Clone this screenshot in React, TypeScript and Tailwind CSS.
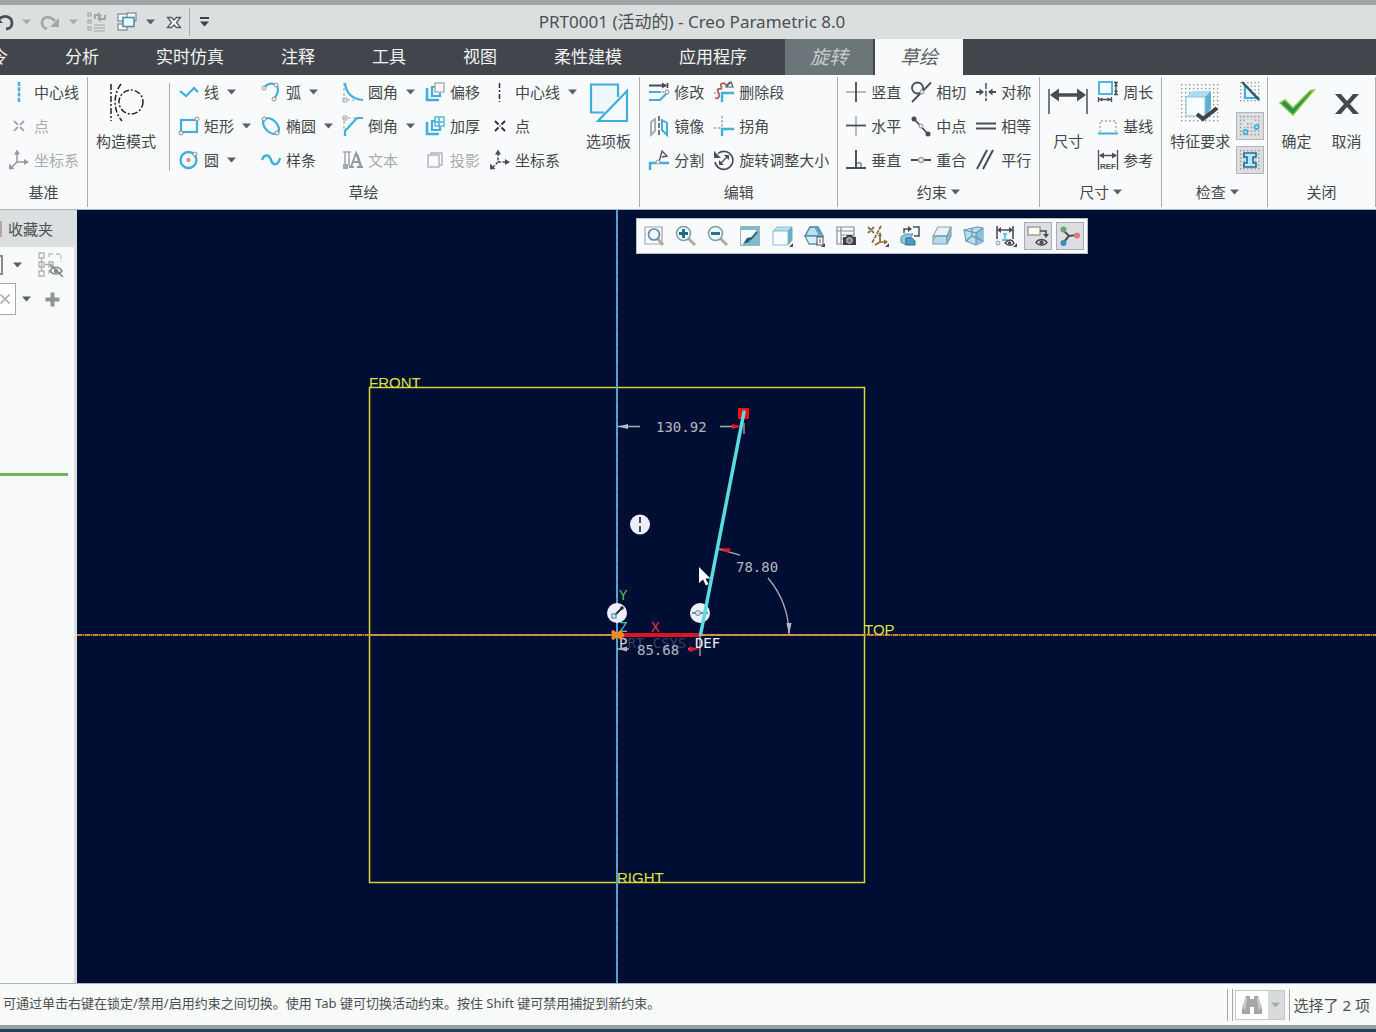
import { useState } from "react";
import type { ReactNode } from "react";
import clsx from "clsx";

const BLUE = "#3fb0dc";
const INK = "#4a4e52";
const MUTE = "#a4a7aa";

type Tool = { label: string; icon: ReactNode; menu?: boolean; disabled?: boolean };

function Icon({ children, size = 22, className }: { children: ReactNode; size?: number; className?: string }) {
  return (
    <svg
      width={size}
      height={size}
      viewBox={`0 0 ${size} ${size}`}
      fill="none"
      stroke={INK}
      strokeWidth="1.5"
      className={clsx("shrink-0", className)}
      aria-hidden="true"
    >
      {children}
    </svg>
  );
}

function Caret({ className = "text-[#5b5f63]" }: { className?: string }) {
  return (
    <svg width="9" height="6" viewBox="0 0 9 6" className={clsx("shrink-0", className)} aria-hidden="true">
      <path d="M0 0.5h9L4.5 5.5z" fill="currentColor" />
    </svg>
  );
}

function Knob({ x, y }: { x: number; y: number }) {
  return <circle cx={x} cy={y} r="2" fill="#f3f3f3" stroke="#8d9093" strokeWidth="1" />;
}

function Dots({ cols, rows, step }: { cols: number; rows: number; step: number }) {
  return (
    <g fill="#8b8f94" stroke="none">
      {Array.from({ length: cols * rows }, (_, i) => (
        <rect key={i} x={1 + (i % cols) * step} y={1 + Math.floor(i / cols) * step} width="1.3" height="1.3" />
      ))}
    </g>
  );
}

const axisArrows = (color: string, dash?: string) => (
  <Icon>
    <path d="M9 4v9h9M9 13l-5 5" stroke={color} strokeDasharray={dash} />
    <path d="M9 0.5l3 5H6zM21 13l-5 3v-6zM1 20.5v-6l5.5 5.5z" fill={color} stroke="none" />
  </Icon>
);

const datumTools: Tool[] = [
  {
    label: "中心线",
    icon: (
      <Icon>
        <path d="M11 1v20" stroke={BLUE} strokeWidth="2.5" strokeDasharray="4 1.3" />
      </Icon>
    ),
  },
  {
    label: "点",
    disabled: true,
    icon: (
      <Icon>
        <path d="M6 6l10 10M16 6L6 16" stroke={MUTE} strokeWidth="2" strokeDasharray="5.5 3" />
      </Icon>
    ),
  },
  { label: "坐标系", disabled: true, icon: axisArrows("#96999c") },
];

const sketchA: Tool[] = [
  {
    label: "线",
    menu: true,
    icon: (
      <Icon>
        <path d="M2 10l6 5 8-8 4 4" stroke={BLUE} strokeWidth="2.2" />
      </Icon>
    ),
  },
  {
    label: "矩形",
    menu: true,
    icon: (
      <Icon>
        <rect x="3" y="5" width="16" height="12" stroke={BLUE} strokeWidth="2.2" />
        <Knob x={19} y={4} />
        <Knob x={3} y={18} />
      </Icon>
    ),
  },
  {
    label: "圆",
    menu: true,
    icon: (
      <Icon>
        <circle cx="10.5" cy="11" r="8" stroke={BLUE} strokeWidth="2.4" />
        <circle cx="10.5" cy="11" r="2.2" fill="#c79a92" stroke="none" />
        <Knob x={17} y={5} />
      </Icon>
    ),
  },
];

const sketchB: Tool[] = [
  {
    label: "弧",
    menu: true,
    icon: (
      <Icon>
        <path d="M4 7C8 1 18 1 18 9c0 4-2 5-3 8" stroke={BLUE} strokeWidth="2.2" />
        <Knob x={4} y={7} />
        <Knob x={16} y={4} />
        <Knob x={14} y={18} />
      </Icon>
    ),
  },
  {
    label: "椭圆",
    menu: true,
    icon: (
      <Icon>
        <ellipse cx="11" cy="11" rx="9.5" ry="6" transform="rotate(45 11 11)" stroke={BLUE} strokeWidth="2.2" />
        <Knob x={4} y={4} />
        <Knob x={17} y={18} />
      </Icon>
    ),
  },
  {
    label: "样条",
    icon: (
      <Icon>
        <path d="M2 11c2-6 7-6 9 0s7 6 9-2" stroke={BLUE} strokeWidth="2.4" />
      </Icon>
    ),
  },
];

const sketchC: Tool[] = [
  {
    label: "圆角",
    menu: true,
    icon: (
      <Icon>
        <path d="M2 2v17h15" stroke={MUTE} strokeDasharray="3 2" strokeWidth="1.2" />
        <path d="M3 2c1 10 7 16 18 17" stroke={BLUE} strokeWidth="2.2" />
        <path d="M1 17h4v4H1z" stroke={MUTE} strokeWidth="1" />
      </Icon>
    ),
  },
  {
    label: "倒角",
    menu: true,
    icon: (
      <Icon>
        <path d="M2 14V3h13" stroke={MUTE} strokeDasharray="3 2" strokeWidth="1.2" />
        <path d="M3 21v-5L15 3h6" stroke={BLUE} strokeWidth="2.2" />
        <path d="M1 1h4v4H1z" stroke={MUTE} strokeWidth="1" />
      </Icon>
    ),
  },
  {
    label: "文本",
    disabled: true,
    icon: (
      <Icon>
        <path d="M3 3v13M7 3v14M1 3h8" stroke={MUTE} />
        <path d="M7 18h5M15 18h6M9 18l5-14 5 14M10.5 13h7" stroke="#96999c" strokeWidth="1.8" />
        <path d="M15 5l4 13" stroke="#96999c" strokeWidth="2.5" />
        <rect x="1" y="15" width="5" height="5" fill={MUTE} stroke="none" />
      </Icon>
    ),
  },
];

const offsetIcon = (extra: boolean) => (
  <Icon>
    <path d="M3 7v12h12" stroke={BLUE} strokeWidth="2.6" />
    <path d="M11 6H8v9h8v-3" stroke={BLUE} strokeWidth="2.2" />
    <rect x="11" y="2" width="9" height="9" stroke={extra ? BLUE : MUTE} strokeWidth="1.3" />
    {extra && <path d="M15 3v9M11 7h8" stroke={BLUE} strokeWidth="1.5" />}
  </Icon>
);

const sketchD: Tool[] = [
  { label: "偏移", icon: offsetIcon(false) },
  { label: "加厚", icon: offsetIcon(true) },
  {
    label: "投影",
    disabled: true,
    icon: (
      <Icon>
        <path d="M4 6h11v12H4zM7 6V4h11v12h-3" stroke="#b4b7ba" strokeWidth="1.5" />
      </Icon>
    ),
  },
];

const sketchE: Tool[] = [
  {
    label: "中心线",
    menu: true,
    icon: (
      <Icon>
        <path d="M10.5 2v19" stroke="#2c2f33" strokeDasharray="5 2 2 2" />
      </Icon>
    ),
  },
  {
    label: "点",
    icon: (
      <Icon>
        <path d="M6 6l3.5 3.5M12.500 12.5L16 16M16 6l-3.5 3.5M9.5 12.5L6 16" stroke="#2c2f33" strokeWidth="1.800" />
        <circle cx="11" cy="11" r="0.8" fill="#2c2f33" stroke="none" />
      </Icon>
    ),
  },
  { label: "坐标系", icon: axisArrows(INK, "3 1.5") },
];

const editA: Tool[] = [
  {
    label: "修改",
    icon: (
      <Icon>
        <path d="M1 4.500h17M19.5 2v5" strokeWidth="1.8" />
        <path d="M14 1.5l5 3-5 3z" fill={INK} stroke="none" />
        <path d="M1 11h12" stroke={BLUE} strokeWidth="2" />
        <path d="M14 11h5" stroke={MUTE} strokeDasharray="2 1" />
        <path d="M1 19h11l7-7" stroke={BLUE} strokeWidth="2.2" />
        <Knob x={19} y={11} />
      </Icon>
    ),
  },
  {
    label: "镜像",
    icon: (
      <Icon>
        <path d="M11 1v20" strokeDasharray="5 2" />
        <path d="M7 4L3 7v13l4-4z" stroke={MUTE} strokeWidth="1.8" />
        <path d="M14 5l5 3v12l-5-5z" stroke={BLUE} strokeWidth="2" />
      </Icon>
    ),
  },
  {
    label: "分割",
    icon: (
      <Icon>
        <path d="M2 21v-7h6m4 0h9" stroke={BLUE} strokeWidth="2.4" />
        <path d="M11 13l3-11 5 5-5 1" strokeWidth="1.3" />
        <Knob x={10} y={13} />
      </Icon>
    ),
  },
];

const editB: Tool[] = [
  {
    label: "删除段",
    icon: (
      <Icon>
        <path d="M2 17c3 1 5-1 4-4s-3-5 0-5 3-1 2-3 2-4 4-2 3 0 5-2" stroke="#b0605c" strokeWidth="1.8" />
        <path d="M13 6l5-5 2 5z" strokeWidth="1.1" />
        <path d="M9 21v-9h12" stroke={BLUE} strokeWidth="2.4" />
        <path d="M1 12h4" stroke={MUTE} strokeDasharray="2 1" />
      </Icon>
    ),
  },
  {
    label: "拐角",
    icon: (
      <Icon>
        <path d="M9 1v11M1 13h8" stroke={MUTE} strokeDasharray="2.5 1.5" />
        <path d="M9 21v-7h12" stroke={BLUE} strokeWidth="2.4" />
      </Icon>
    ),
  },
  {
    label: "旋转调整大小",
    icon: (
      <Icon>
        <path d="M5 4.500A9 9 0 1 1 2 13" strokeWidth="1.6" />
        <path d="M8 14l6-6" strokeWidth="1.3" />
        <path d="M1 2v7h7zM16 6v5l-5-5zM6 16v-5l5 5z" fill={INK} stroke="none" />
      </Icon>
    ),
  },
];

const constraintA: Tool[] = [
  {
    label: "竖直",
    icon: (
      <Icon>
        <path d="M1 11h20" stroke="#a2a5a7" />
        <path d="M11 1v20" strokeWidth="1.8" />
      </Icon>
    ),
  },
  {
    label: "水平",
    icon: (
      <Icon>
        <path d="M11 1v20" stroke="#a2a5a7" />
        <path d="M1 10.5h20" strokeWidth="1.8" />
      </Icon>
    ),
  },
  {
    label: "垂直",
    icon: (
      <Icon>
        <path d="M11 1v18M1 19h20" strokeWidth="1.9" />
        <path d="M11 14h5v5" strokeWidth="1" />
      </Icon>
    ),
  },
];

const constraintB: Tool[] = [
  {
    label: "相切",
    icon: (
      <Icon>
        <circle cx="7.5" cy="7" r="5.5" strokeWidth="1.8" />
        <path d="M21 1.5L2 21" strokeWidth="1.8" />
        <Knob x={12} y={11} />
      </Icon>
    ),
  },
  {
    label: "中点",
    icon: (
      <Icon>
        <path d="M4 4l14 15" strokeWidth="1.8" />
        <circle cx="4" cy="4" r="2.5" fill={INK} stroke="none" />
        <circle cx="18" cy="19" r="2.5" fill={INK} stroke="none" />
        <Knob x={11} y={11} />
      </Icon>
    ),
  },
  {
    label: "重合",
    icon: (
      <Icon>
        <path d="M1 11h7M14 11h7" strokeWidth="2.2" />
        <circle cx="11" cy="11" r="2.5" fill="#eee" stroke={MUTE} />
      </Icon>
    ),
  },
];

const constraintC: Tool[] = [
  {
    label: "对称",
    icon: (
      <Icon>
        <path d="M11 2v18" strokeDasharray="6 1.5" />
        <path d="M1 11h5M16 11h5" strokeWidth="1.8" />
        <path d="M9 11L4.500 7.5v7zM13 11l4.5-3.5v7z" fill={INK} stroke="none" />
      </Icon>
    ),
  },
  {
    label: "相等",
    icon: (
      <Icon>
        <path d="M1 8.5h20M1 13.5h20" strokeWidth="1.9" />
      </Icon>
    ),
  },
  {
    label: "平行",
    icon: (
      <Icon>
        <path d="M2 20L12 1M8 20L18 1" strokeWidth="2" />
      </Icon>
    ),
  },
];

const dimensionTools: Tool[] = [
  {
    label: "周长",
    icon: (
      <Icon>
        <rect x="2" y="1" width="13" height="12" stroke={BLUE} strokeWidth="1.8" />
        <path d="M19 2v11M17 1.5h4M17 13.5h4M2 18.5h12M1.5 16v5M14.5 16v5" strokeWidth="1.3" />
        <path d="M19 2l2 3.5h-4zM19 13l2-3.5h-4zM2 18.5l3.5-2v4zM14 18.5l-3.5-2v4z" fill={INK} stroke="none" />
      </Icon>
    ),
  },
  {
    label: "基线",
    icon: (
      <Icon>
        <path d="M3 17V6h16v11" stroke={MUTE} strokeDasharray="2 2" strokeWidth="1.3" />
        <path d="M1 18.5h20" stroke={BLUE} strokeWidth="2" />
      </Icon>
    ),
  },
  {
    label: "参考",
    icon: (
      <Icon>
        <path d="M1.5 1v20M20.5 1v20M3 6.5h16" strokeWidth="1.3" />
        <path d="M2 6.5l5-3v6zM20 6.5l-5-3v6z" fill={INK} stroke="none" />
        <text
          x="11"
          y="20"
          textAnchor="middle"
          fontSize="8"
          fontWeight="700"
          fill={INK}
          stroke="none"
          className="font-['Liberation_Sans',sans-serif]"
        >
          REF
        </text>
      </Icon>
    ),
  },
];

const viewTools: { label: string; pressed?: boolean; icon: ReactNode }[] = [
  {
    label: "重新调整",
    icon: (
      <Icon>
        <path d="M2 2h17v17H2z" stroke={MUTE} strokeWidth="1.2" />
        <path d="M15 14l5 6" stroke="#b3a79f" strokeWidth="3" />
        <circle cx="11" cy="9.500" r="5.5" fill="#eef6fa" stroke="#5f8da3" strokeWidth="1.7" />
      </Icon>
    ),
  },
  {
    label: "放大",
    icon: (
      <Icon>
        <path d="M13 13l7 7" stroke="#b3a79f" strokeWidth="3" />
        <circle cx="8.5" cy="8.5" r="7" fill="#f2f8fb" stroke="#7e9cab" />
        <path d="M4 8.5h9M8.5 4v9" stroke="#156c8e" strokeWidth="2.8" />
      </Icon>
    ),
  },
  {
    label: "缩小",
    icon: (
      <Icon>
        <path d="M13 13l7 7" stroke="#b3a79f" strokeWidth="3" />
        <circle cx="8.5" cy="8.5" r="7" fill="#f2f8fb" stroke="#7e9cab" />
        <path d="M4 8.500h9" stroke="#156c8e" strokeWidth="2.8" />
      </Icon>
    ),
  },
  {
    label: "重画",
    icon: (
      <Icon>
        <rect x="1.5" y="1.5" width="19" height="19" fill="#7dbad2" stroke="#9bb4be" strokeWidth="1" />
        <path d="M2 5h15C16 11 10 18 2 20z" fill="#f5fafc" stroke="none" />
        <path d="M18 7l-7 8" stroke="#41535d" strokeWidth="1.8" />
        <path d="M12 12l-2 5-6 2 4-6z" fill="#1f5e7d" stroke="none" />
      </Icon>
    ),
  },
  {
    label: "显示样式",
    icon: (
      <Icon>
        <path d="M2 6l4-4h15l-4 4z" fill="#b9e1f0" stroke="#8dbdd1" strokeWidth="1" />
        <path d="M17 6l4-4v13l-4 5z" fill="#66acc9" stroke="#6fa9c2" strokeWidth="1" />
        <path d="M2 6h15v14H2z" fill="#fafdff" stroke="#8db9cc" strokeWidth="1" />
        <path d="M22 18v4h-4z" fill={INK} stroke="none" />
      </Icon>
    ),
  },
  {
    label: "已保存方向",
    icon: (
      <Icon>
        <path d="M7 2h8l5 9H2z" fill="#b9e1f0" stroke="#477d96" strokeWidth="1.3" />
        <path d="M2 11h14l-2 8H6z" fill="#d9eef6" stroke="#5d93ac" strokeWidth="1.3" />
        <path d="M15 2l5 9h-4L11 2z" fill="#5da7c5" stroke="none" />
        <rect x="14" y="12" width="6" height="8" fill="#fff" stroke={INK} strokeWidth="1" />
        <path d="M16 15h2M16 17h2" strokeWidth="1" />
        <path d="M22 18v4h-4z" fill={INK} stroke="none" />
      </Icon>
    ),
  },
  {
    label: "视图管理器",
    icon: (
      <Icon>
        <path d="M2 2h17v17H2zM2 6h17M6 2v17M6 10h13M6 14h13" stroke="#8a8e92" strokeWidth="1.2" />
        <path d="M8 12h3l1-2h5l1 2h3v8H8z" fill="#3e4246" stroke="none" />
        <circle cx="14.5" cy="15.5" r="2.8" fill="#777" stroke="#ddd" strokeWidth="1" />
      </Icon>
    ),
  },
  {
    label: "基准显示过滤器",
    icon: (
      <Icon>
        <path d="M1 2l6 6M7 2L1 8M14 1L5 18" stroke="#8a7344" strokeWidth="1.8" strokeDasharray="4 1" />
        <path d="M13 9v8h7M13 17l-5 3" stroke="#8a6a3c" strokeWidth="1.7" />
        <path d="M13 7l2 4h-4zM21 17l-4 2.5v-5z" fill="#8a6a3c" stroke="none" />
        <path d="M22 18v4h-4z" fill={INK} stroke="none" />
      </Icon>
    ),
  },
  {
    label: "草绘视图",
    icon: (
      <Icon>
        <path d="M14 2h6v9h-5" strokeWidth="1.5" />
        <path d="M5 8V4h5" strokeWidth="1.5" />
        <path d="M9 1l4 3-4 3z" fill={INK} stroke="none" />
        <path d="M2 12l4-3h8l-3 4H7v7l-5-3z" fill="#8ec8df" stroke="#4d93af" strokeWidth="1" />
        <path d="M7 13h6l3 3v4H7z" fill="#4c9dbf" stroke="#2f7595" strokeWidth="1" />
      </Icon>
    ),
  },
  {
    label: "修剪模型",
    icon: (
      <Icon>
        <path d="M7 2h13l-4 9H2z" fill="#e9f4f8" stroke="#8da6b1" strokeWidth="1.1" />
        <path d="M2 11h14v8H2z" fill="#b5dcec" stroke="#7a9dac" strokeWidth="1.1" />
        <path d="M16 11l4-9v9l-4 8z" fill="#8fc3d8" stroke="#7a9dac" strokeWidth="1.1" />
        <path d="M2 15l4-4h14" stroke="#7a9dac" strokeWidth="1" />
      </Icon>
    ),
  },
  {
    label: "透视图",
    icon: (
      <Icon>
        <path d="M1 5l13-3 6 1v14l-7 3L3 16z" fill="#b9deec" stroke="#6e9db1" strokeWidth="1.1" />
        <path d="M13 8l7-5v14l-7 3z" fill="#8cc2d8" stroke="none" />
        <path d="M1 5l12 3 7-5M13 8v12M3 16l6-5 11 5M9 11V3" stroke="#5d93ac" strokeWidth="1.1" />
      </Icon>
    ),
  },
  {
    label: "注释显示",
    icon: (
      <Icon>
        <path d="M2 1v13M18 1v13M3 5h14" strokeWidth="1.6" />
        <path d="M2 5l4-3v6zM18 5l-4-3v6z" fill={INK} stroke="none" />
        <path d="M10 9v6M7 15h6M8 9h4" stroke={BLUE} strokeWidth="1.3" />
        <circle cx="3" cy="18" r="2" stroke="#999" strokeWidth="1" fill="#eee" />
        <path d="M10 18c3-4 7-4 9 0-2 3-6 3-9 0z" fill="#fff" strokeWidth="1.4" />
        <circle cx="14.5" cy="18" r="1.8" fill={INK} stroke="none" />
        <path d="M22 18v4h-4z" fill={INK} stroke="none" />
      </Icon>
    ),
  },
  {
    label: "草绘器显示",
    pressed: true,
    icon: (
      <Icon>
        <rect x="1" y="2" width="12" height="8" fill="#fdfbef" stroke="#8a8e92" strokeWidth="1.2" />
        <path d="M13 6h6v4" strokeWidth="1.6" />
        <path d="M19 13l-3-4h6z" fill={INK} stroke="none" />
        <path d="M9 17.5c3-4 8-4 11 0-3 3.500-8 3.500-11 0z" fill="#fff" strokeWidth="1.5" />
        <circle cx="14.5" cy="17.5" r="2.2" fill={INK} stroke="none" />
      </Icon>
    ),
  },
  {
    label: "旋转中心",
    pressed: true,
    icon: (
      <Icon>
        <path d="M4 5l6 6 8-1M10 11l-6 7" strokeWidth="2" />
        <circle cx="4.5" cy="4.5" r="3" fill="#6fa370" stroke="none" />
        <circle cx="18" cy="10.5" r="3" fill="#e2777b" stroke="none" />
        <circle cx="4.5" cy="18" r="3" fill="#3a8fbd" stroke="none" />
      </Icon>
    ),
  },
];

function ToolColumn({ tools }: { tools: Tool[] }) {
  return (
    <div className="flex flex-col items-start">
      {tools.map((tool) => (
        <button
          key={tool.label}
          type="button"
          disabled={tool.disabled}
          className="flex h-[34px] items-center gap-1 whitespace-nowrap text-[#44484c] disabled:text-[#a9acaf]"
        >
          {tool.icon}
          <span>{tool.label}</span>
          {tool.menu && <Caret className="ml-1 text-[#5b5f63]" />}
        </button>
      ))}
    </div>
  );
}

function BigTool({ label, icon }: { label: string; icon: ReactNode }) {
  return (
    <button type="button" className="flex flex-col items-center gap-2 self-start pt-2 whitespace-nowrap">
      {icon}
      <span>{label}</span>
    </button>
  );
}

function Group({
  title,
  menu,
  className,
  children,
}: {
  title: string;
  menu?: boolean;
  className?: string;
  children: ReactNode;
}) {
  return (
    <section className={clsx("my-0.5 flex flex-col border-r border-[#a9adb1]", className)}>
      <div className="-mt-0.5 flex h-[102px] gap-[9px]">{children}</div>
      <h2 className="flex h-[30px] items-center justify-center gap-1">
        {title}
        {menu && <Caret />}
      </h2>
    </section>
  );
}

const tabs = ["令", "分析", "实时仿真", "注释", "工具", "视图", "柔性建模", "应用程序"];

function TitleBar() {
  return (
    <header className="flex h-[39px] items-center border-t-[5px] border-[#9fa3a3] bg-[#dbdfdf]">
      <div className="-ml-2 flex flex-1 items-center gap-2">
        <button type="button" aria-label="撤消">
          <Icon>
            <path d="M7 8c6-5 13-2 13 4 0 3-2 6-6 6" strokeWidth="2.8" />
            <path d="M3 3v9h8z" fill={INK} stroke="none" />
          </Icon>
        </button>
        <Caret className="text-[#a7abab]" />
        <button type="button" aria-label="重做">
          <Icon>
            <path d="M16 10C9 3 3 7 3 12c0 3 2 5 5 6" stroke="#a2a6a6" strokeWidth="2.6" />
            <path d="M20 7v9h-9z" fill="#a2a6a6" stroke="none" />
          </Icon>
        </button>
        <Caret className="text-[#a7abab]" />
        <button type="button" aria-label="重新生成">
          <Icon>
            <path d="M2 2h3v3H2zM2 9h3v3H2zM2 16h3v3H2zM8 14h11M8 17h11M8 20h11" stroke="#a2a6a6" strokeWidth="1.2" />
            <path d="M9 8V4h5M19 4v4h-5" stroke="#a2a6a6" strokeWidth="2" />
            <path d="M12 1l4 3-4 3zM15 5v6l-4-3z" fill="#a2a6a6" stroke="none" />
          </Icon>
        </button>
        <button type="button" aria-label="窗口">
          <Icon>
            <rect x="2" y="3" width="11" height="7" fill="#f4f7f8" stroke="#7f878b" strokeWidth="1.2" />
            <rect x="2" y="13" width="9" height="6" fill="#f4f7f8" stroke="#7f878b" strokeWidth="1.2" />
            <rect x="11" y="2" width="9" height="8" fill="#f4f7f8" stroke="#7f878b" strokeWidth="1.2" />
            <rect x="7" y="6.5" width="11" height="9" fill="#eef6fa" stroke="#3d8fb0" strokeWidth="1.5" />
          </Icon>
        </button>
        <Caret />
        <button type="button" aria-label="关闭窗口">
          <Icon>
            <path
              d="M4.500 6.500h4L11 9l2.500-2.500h4L13.500 11.500l4 5h-4L11 14l-2.500 2.500h-4l4-5z"
              fill="#fafafa"
              stroke="#55595d"
              strokeWidth="1.3"
            />
          </Icon>
        </button>
        <span className="-ml-1 h-7 w-px bg-[#a6aaaa]" />
        <button type="button" aria-label="自定义快速访问工具栏" className="ml-0.5 flex flex-col gap-0.5">
          <span className="h-0.5 w-[9px] bg-[#3c4044]" />
          <Caret className="text-[#3c4044]" />
        </button>
      </div>
      <h1 className="pl-4 text-[17px] leading-6 text-[#4b4f52]">PRT0001 (活动的) - Creo Parametric 8.0</h1>
      <div className="flex-1" />
    </header>
  );
}

function Ribbon() {
  return (
    <div className="flex border-b border-[#aab4c2] bg-[#f9fafc] text-[15px] leading-5 text-[#44484c]">
      <Group title="基准" className="px-2">
        <ToolColumn tools={datumTools} />
      </Group>

      <Group title="草绘" className="px-2">
        <BigTool
          label="构造模式"
          icon={
            <Icon size={40}>
              <path d="M5 1v37" stroke="#222" strokeDasharray="6 2 2 2" />
              <path d="M15 1C7 11 7 28 16 38" stroke="#222" strokeDasharray="6 2 2 2" />
              <circle cx="25" cy="19" r="12" stroke="#222" strokeDasharray="6 2 2 2" />
            </Icon>
          }
        />
        <div className="mt-2 ml-1 h-[88px] w-px bg-[#a9adb1]" />
        <div className="-ml-px flex gap-[9px]">
          <ToolColumn tools={sketchA} />
          <ToolColumn tools={sketchB} />
          <ToolColumn tools={sketchC} />
          <ToolColumn tools={sketchD} />
          <ToolColumn tools={sketchE} />
        </div>
        <BigTool
          label="选项板"
          icon={
            <Icon size={40}>
              <path d="M29 14V1.5H2v28h13" fill="#eef7fb" stroke={BLUE} strokeWidth="2.2" />
              <path d="M38 8v30H9z" fill="#f4fafd" stroke={BLUE} strokeWidth="2.2" />
            </Icon>
          }
        />
      </Group>

      <Group title="编辑" className="px-2">
        <ToolColumn tools={editA} />
        <ToolColumn tools={editB} />
      </Group>

      <Group title="约束" menu className="pr-2 pl-[7px]">
        <ToolColumn tools={constraintA} />
        <ToolColumn tools={constraintB} />
        <ToolColumn tools={constraintC} />
      </Group>

      <Group title="尺寸" menu className="px-2">
        <BigTool
          label="尺寸"
          icon={
            <Icon size={40}>
              <path d="M1 6v25M39 6v25" strokeWidth="1.5" />
              <path d="M8 12h24" strokeWidth="3.5" />
              <path d="M2 12l9-6.5v13zM38 12l-9-6.5v13z" fill={INK} stroke="none" />
            </Icon>
          }
        />
        <ToolColumn tools={dimensionTools} />
      </Group>

      <Group title="检查" menu className="pr-[3px] pl-2">
        <BigTool
          label="特征要求"
          icon={
            <Icon size={40}>
              <Dots cols={10} rows={10} step={4} />
              <path d="M6 14l7-6h18l-6 6z" fill="#a9dcf0" stroke="none" />
              <path d="M25 14l6-6v18l-6 7z" fill="#5cb0d3" stroke="none" />
              <path d="M6 14h19v19H6z" fill="#f7fcff" stroke="#8fc4da" strokeWidth="1" />
              <path d="M17 31l6 5 14-11" stroke="#3f4347" strokeWidth="4" />
            </Icon>
          }
        />
        <div className="-ml-[3px] flex flex-col">
          <button type="button" aria-label="重叠几何" className="my-[3px] flex h-7 w-7 items-center justify-center">
            <Icon>
              <Dots cols={6} rows={6} step={3.6} />
              <path d="M6 4v13h13z" fill="#e3f2f8" stroke={BLUE} strokeWidth="2" />
              <path d="M3 1l17 18" strokeWidth="2" stroke="#2f5468" />
            </Icon>
          </button>
          {["突出显示开放端", "着色封闭环"].map((label, i) => (
            <button
              key={label}
              type="button"
              aria-pressed="true"
              aria-label={label}
              className="my-[3px] flex h-7 w-7 items-center justify-center border border-[#b3b6b9] bg-[#dcdee0]"
            >
              <Icon>
                <Dots cols={6} rows={6} step={3.6} />
                {i === 0 ? (
                  <>
                    <path d="M3 13l5-7h6l4 6" stroke="#dfe5e9" strokeWidth="2.5" />
                    <circle cx="6.5" cy="17" r="2" fill="#e9f6fb" stroke={BLUE} strokeWidth="1.8" />
                    <circle cx="17.5" cy="12" r="2" fill="#e9f6fb" stroke={BLUE} strokeWidth="1.8" />
                  </>
                ) : (
                  <path d="M5 4h12v4h-3v6h3v4H5v-4h3V8H5z" fill="#bfe4f3" stroke="#1f6f92" strokeWidth="1.6" />
                )}
              </Icon>
            </button>
          ))}
        </div>
      </Group>

      <Group title="关闭" className="flex-1 items-center">
        <div className="flex gap-4">
          <BigTool
            label="确定"
            icon={
              <Icon size={40} className="-mx-[3px]">
                <path d="M3 20l5-3 8 8L33 8l4-1-21 25z" fill="#2f9150" stroke="#86c440" strokeWidth="1.5" />
              </Icon>
            }
          />
          <BigTool
            label="取消"
            icon={
              <Icon size={40} className="-mx-[3px]">
                <path d="M8 11h6l6 7 6-7h6l-9 10 9 10h-6l-6-7-6 7H8l9-10z" fill="#454a4e" stroke="none" />
              </Icon>
            }
          />
        </div>
      </Group>
    </div>
  );
}

function SidePanel() {
  return (
    <aside className="w-[77px] shrink-0 overflow-hidden border-r-[3px] border-[#dbdfe0] bg-[#f8fafa] text-[15px] leading-5 text-[#4b4f52]">
      <div className="flex h-[37px] items-center bg-[#dbdfdf]">
        <span className="h-4 w-0.5 bg-[#b9a79c]" />
        <button type="button" className="ml-1.5 whitespace-nowrap">
          收藏夹
        </button>
      </div>
      <div className="flex h-9 items-center">
        <span className="-ml-4 h-5 w-[19px] shrink-0 border-2 border-[#85898c]" />
        <Caret className="ml-2.5 text-[#5b5f63]" />
        <button type="button" aria-label="树过滤器" className="ml-4">
          <Icon size={26}>
            <path d="M1 1h5v5H1zM1 10h5v5H1zM1 19h5v5H1zM11 10h4v5h-4zM3.5 6v13M6 12.5h5" stroke="#aeb1b4" strokeWidth="1.3" />
            <path d="M11 1v6M11 2h4M18 2h5v8M11 18v6" stroke="#b9bcbf" strokeWidth="1.3" strokeDasharray="4 2" />
            <path d="M12 19c3-5 9-5 12 0-3 4-9 4-12 0zM12 12l13 13" stroke="#85898c" strokeWidth="1.5" />
            <circle cx="18" cy="19" r="2.2" fill="#85898c" stroke="none" />
          </Icon>
        </button>
      </div>
      <div className="flex h-8 items-center">
        <div className="-ml-10 flex h-8 w-14 shrink-0 items-center border border-[#a5a9ac] bg-white">
          <input type="text" aria-label="搜索" className="w-full min-w-0 outline-none" />
          <button type="button" aria-label="清除" className="pr-1">
            <svg width="12" height="12" viewBox="0 0 12 12" stroke="#a2a5a8" strokeWidth="1.5" aria-hidden="true">
              <path d="M1.5 1.5l9 9M10.5 1.5l-9 9" />
            </svg>
          </button>
        </div>
        <Caret className="ml-1.5 text-[#5b5f63]" />
        <button type="button" aria-label="添加" className="ml-3.5">
          <svg width="15" height="15" viewBox="0 0 15 15" stroke="#919497" strokeWidth="4" aria-hidden="true">
            <path d="M7.5 0.5v14M0.5 7.5h14" />
          </svg>
        </button>
      </div>
      <div className="mt-[158px] mr-1.5 h-[3px] bg-[#6cb85a]" />
    </aside>
  );
}

function Sketch() {
  return (
    <svg className="absolute inset-0 h-full w-full" fill="none" aria-label="草绘图形">
      {/* datum planes and references */}
      <rect x="292.5" y="177.5" width="495" height="495" stroke="#d3d636" strokeWidth="1.5" />
      <line x1="0" y1="425" x2="100%" y2="425" stroke="#7a4d1c" strokeWidth="1.5" />
      <line x1="0" y1="425" x2="100%" y2="425" stroke="#e39a3c" strokeWidth="1.5" strokeDasharray="5 1 1 1" />
      <line x1="292" y1="425" x2="787" y2="425" stroke="#cfa14e" strokeWidth="1.5" />
      <line x1="540" y1="0" x2="540" y2="100%" stroke="#8d9fb0" strokeWidth="2" />
      <line x1="540" y1="0" x2="540" y2="100%" stroke="#4aa0d8" strokeWidth="2" strokeDasharray="6 1 1 1" />

      <g fill="#dfe243" fontSize="15" className="font-['Liberation_Sans',sans-serif]">
        <text x="292" y="178">FRONT</text>
        <text x="787" y="425">TOP</text>
        <text x="540" y="673">RIGHT</text>
      </g>

      {/* dimensions */}
      <g stroke="#a8adb6" strokeWidth="1.3">
        <path d="M541 216.5h22M643 216.5h12M667 213v11M623 427v19M541 439h11M611 439h4" />
        <path d="M642 339l21 6M691 368A89 89 0 0 1 712 424" />
      </g>
      <path d="M541 216.500l10-2.5v5zM541 439l9-2.5v5zM712 425l-2.5-12h5z" fill="#b5b9c1" />
      <path d="M665 216.500l-10-2.5v5zM623 439l-11-2.5v5zM642 338l11.5 0.5-1.5 5z" fill="#e31a24" />

      {/* coordinate system labels */}
      <g fontSize="14" className="font-['DejaVu_Sans_Mono',monospace]">
        <text x="542" y="438" fill="#34405e">
          <tspan fill="#d5d8de">P</tspan>RT_CSYS_<tspan fill="#f0f2f5">DEF</tspan>
        </text>
        <g fill="#b3b8c0">
          <text x="579" y="222">130.92</text>
          <text x="659" y="362">78.80</text>
          <text x="560" y="445">85.68</text>
        </g>
        <text x="542" y="390" fill="#33cc4d">Y</text>
        <text x="542" y="422" fill="#3fc6dd">Z</text>
        <text x="574" y="422" fill="#e2343f">X</text>
      </g>

      {/* constraint glyphs */}
      <g fill="#eeeefb">
        <circle cx="563" cy="314.5" r="10" />
        <circle cx="540" cy="403" r="10" />
        <circle cx="623" cy="403" r="10" />
      </g>
      <path d="M563 307v6M563 316v6" stroke="#33363d" strokeWidth="1.8" />
      <path d="M538 405l7-7" stroke="#23262c" strokeWidth="2" />
      <circle cx="545" cy="398" r="1.8" fill="#23262c" />
      <rect x="535" y="404" width="4" height="4" stroke="#4f9cb8" strokeWidth="1.3" />
      <path d="M615 403h16" stroke="#6d7f94" strokeWidth="1.8" />
      <circle cx="621" cy="403" r="2.5" fill="#cfe8f2" stroke="#5c8fa8" />

      <rect x="661" y="198" width="11" height="11" fill="#ee1111" />
      <line x1="541" y1="425" x2="623" y2="425" stroke="#df1320" strokeWidth="4" />
      <path d="M667 202L623.5 425" stroke="#58dcdf" strokeWidth="3.5" strokeLinecap="round" />
      <path d="M535 421l10 8M545 421l-10 8M535 425h12" stroke="#f58a1f" strokeWidth="3.5" />

      <path d="M622 357v16l4-3.500 3 6 2.500-1.500-3-5.500h5z" fill="#ffffff" />
    </svg>
  );
}

function ViewToolbar() {
  return (
    <div
      role="toolbar"
      aria-label="图形工具栏"
      className="absolute top-2 left-[559px] flex gap-1 border border-[#b8bdc6] bg-[#f8fafc] p-[3px]"
    >
      {viewTools.map((tool) => (
        <button
          key={tool.label}
          type="button"
          aria-label={tool.label}
          className={clsx(
            "flex h-7 w-7 items-center justify-center",
            tool.pressed && "border border-[#a9adb3] bg-[#dcdee2]",
          )}
        >
          {tool.icon}
        </button>
      ))}
    </div>
  );
}

function StatusBar() {
  return (
    <footer className="border-b-[3px] border-[#24415a]">
      <div className="flex h-[46px] items-center justify-between border-t border-b-4 border-t-[#aab4c2] border-b-[#9a9fa2] bg-[#f9fafa] text-[#4b4f52]">
        <p className="pb-1 pl-[3px] text-[13px] leading-5 whitespace-nowrap">
          可通过单击右键在锁定/禁用/启用约束之间切换。使用 Tab 键可切换活动约束。按住 Shift 键可禁用捕捉到新约束。
        </p>
        <div className="flex items-center pr-1.5 text-[15px] leading-5 whitespace-nowrap">
          <span className="h-8 w-1.5 border-x border-[#a6a9ac]" />
          <div className="ml-0.5 flex h-[30px] border border-[#c4c7ca]">
            <button type="button" aria-label="查找" className="flex w-8 items-center justify-center bg-white">
              <Icon>
                <path d="M5 2h4v3h4V2h4l4 12v6h-8v-7h-4v7H1v-6z" fill="#a5a7a9" stroke="none" />
                <path d="M5 4L3 15M17 4l2 11" stroke="#cfd1d3" strokeWidth="2" />
              </Icon>
            </button>
            <button type="button" aria-label="查找选项" className="flex w-4 items-center justify-center bg-[#d8dadb]">
              <Caret className="text-[#a7abab]" />
            </button>
          </div>
          <span className="mx-1 h-8 w-px bg-[#a6a9ac]" />
          <span>选择了 2 项</span>
        </div>
      </div>
    </footer>
  );
}

export default function App() {
  const [activeTab, setActiveTab] = useState("草绘");

  return (
    <div className="flex min-h-screen flex-col overflow-hidden bg-[#f9fafc] font-['Noto_Sans','Noto_Sans_CJK_SC',sans-serif]">
      <TitleBar />

      <nav className="flex h-9 bg-[#42464c] text-[17px] leading-6 whitespace-nowrap text-[#f2f3f4]">
        <div className="-ml-[37px] flex gap-px">
          {tabs.map((tab) => (
            <button key={tab} type="button" onClick={() => setActiveTab(tab)} className="px-7">
              {tab}
            </button>
          ))}
        </div>
        <div className="ml-2.5 flex gap-0.5">
          {["旋转", "草绘"].map((tab) => (
            <button
              key={tab}
              type="button"
              onClick={() => setActiveTab(tab)}
              className={clsx(
                "px-[25px] text-[19px] italic",
                activeTab === tab ? "bg-[#f9fafc] text-[#5b6065]" : "bg-[#6c7679] text-[#c3cdcb]",
              )}
            >
              {tab}
            </button>
          ))}
        </div>
      </nav>

      <Ribbon />

      <main className="flex flex-1">
        <SidePanel />
        <div className="relative min-w-0 flex-1 overflow-hidden bg-[#000e33]">
          <Sketch />
          <ViewToolbar />
        </div>
      </main>

      <StatusBar />
    </div>
  );
}
